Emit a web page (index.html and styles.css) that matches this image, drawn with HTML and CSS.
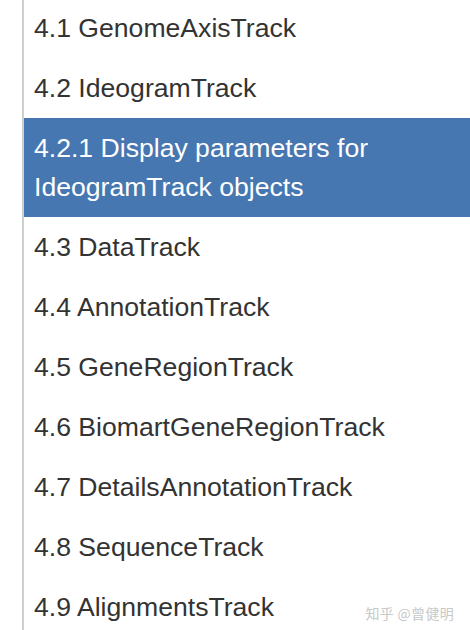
FILE: index.html
```html
<!DOCTYPE html>
<html>
<head>
<meta charset="utf-8">
<link rel="stylesheet" href="styles.css">
</head>
<body>
<div class="page">
  <ul class="toc">
    <li class="item">4.1 GenomeAxisTrack</li>
    <li class="item">4.2 IdeogramTrack</li>
    <li class="item active">4.2.1 Display parameters for IdeogramTrack objects</li>
    <li class="item">4.3 DataTrack</li>
    <li class="item">4.4 AnnotationTrack</li>
    <li class="item">4.5 GeneRegionTrack</li>
    <li class="item">4.6 BiomartGeneRegionTrack</li>
    <li class="item">4.7 DetailsAnnotationTrack</li>
    <li class="item">4.8 SequenceTrack</li>
    <li class="item">4.9 AlignmentsTrack</li>
  </ul>
  <div class="watermark">知乎 @曾健明</div>
</div>
</body>
</html>
```
FILE: styles.css
```css
html, body {
  margin: 0;
  padding: 0;
  background: #fff;
}
.page {
  position: relative;
  width: 470px;
  height: 630px;
  overflow: hidden;
  padding-left: 22px;
  box-sizing: border-box;
}
.toc {
  list-style: none;
  margin: -2px 0 0 0;
  padding: 0;
  border-left: 2px solid #cfcfcf;
  min-height: 700px;
}
.item {
  font-family: "Liberation Sans", Arial, sans-serif;
  font-size: 26.6px;
  line-height: 39px;
  padding: 10.5px 20px 10.5px 10px;
  color: #333;
}
.item.active {
  background: #4677b1;
  color: #fff;
  padding-right: 60px;
}
.watermark {
  position: absolute;
  right: 16px;
  bottom: 7px;
  font-family: "Noto Sans CJK SC", sans-serif;
  font-size: 14px;
  color: #c8c8c8;
  letter-spacing: 0.3px;
}
```
